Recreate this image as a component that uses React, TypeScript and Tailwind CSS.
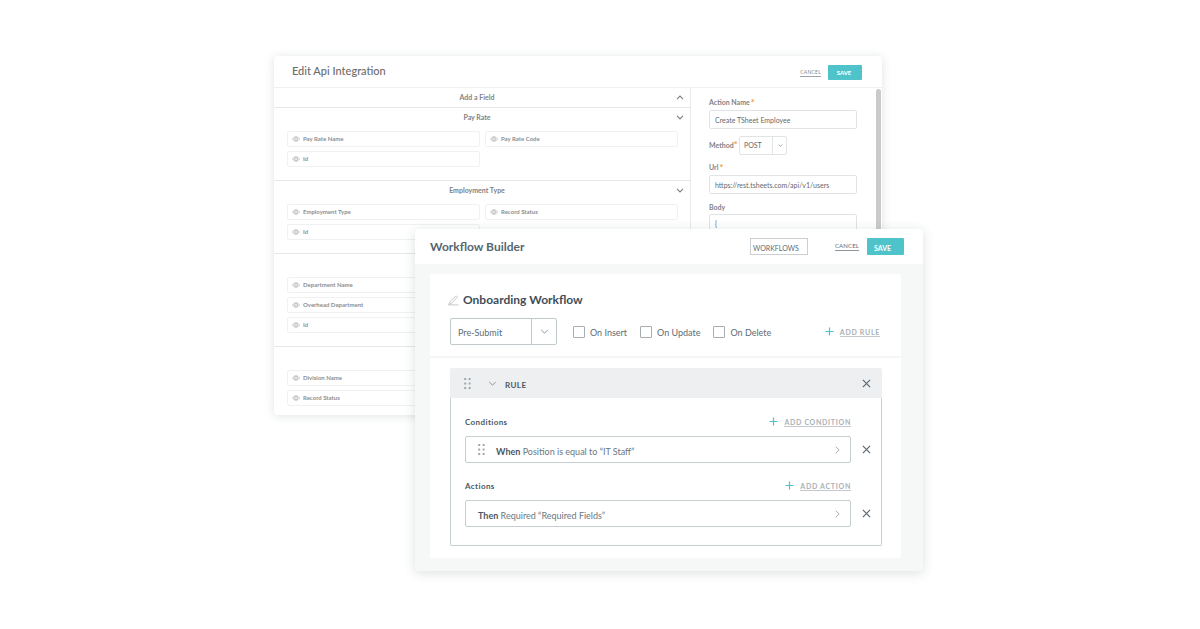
import React from "react";

type IconProps = { className?: string };

const Chevron = ({ className = "" }: IconProps) => (
  <svg viewBox="0 0 10 6" fill="none" stroke="currentColor" strokeWidth="1.2" className={className} aria-hidden="true">
    <path d="M1 1l4 4 4-4" />
  </svg>
);

const BoldChevron = ({ className = "" }: IconProps) => (
  <svg viewBox="0 0 8 5" fill="none" stroke="currentColor" strokeWidth="1.2" className={className} aria-hidden="true">
    <path d="M1 0.900L4 3.900l3-3" />
  </svg>
);

const ChevronRight = ({ className = "" }: IconProps) => (
  <svg viewBox="0 0 5 8" fill="none" stroke="currentColor" className={className} aria-hidden="true">
    <path d="M0.700 0.700L4.200 4L0.700 7.300" />
  </svg>
);

const Eye = ({ className = "" }: IconProps) => (
  <svg viewBox="0 0 16 12" fill="none" stroke="currentColor" strokeWidth="1.200" className={className} aria-hidden="true">
    <path d="M1 6c1.800-3 4.200-4.500 7-4.500S13.200 3 15 6c-1.800 3-4.200 4.500-7 4.500S2.800 9 1 6z" />
    <circle cx="8" cy="6" r="3.200" />
    <path d="M8 4.500v3" />
  </svg>
);

const Cross = ({ className = "" }: IconProps) => (
  <svg viewBox="0 0 9 9" fill="none" stroke="currentColor" strokeWidth="1.200" className={className} aria-hidden="true">
    <path d="M0.900 0.900l7.200 7.200M8.100 0.900L0.900 8.100" />
  </svg>
);

const Plus = ({ className = "" }: IconProps) => (
  <svg viewBox="0 0 9 9" fill="none" stroke="currentColor" strokeWidth="1.200" className={className} aria-hidden="true">
    <path d="M4.500 0.500v8M0.500 4.500h8" />
  </svg>
);

const Grip = ({ className = "" }: IconProps) => (
  <svg viewBox="0 0 7 11" fill="currentColor" className={className} aria-hidden="true">
    {[0, 4.5, 9].map((y) => (
      <React.Fragment key={y}>
        <rect x="0.200" y={y} width="2" height="2" rx="0.500" />
        <rect x="4.600" y={y} width="2" height="2" rx="0.500" />
      </React.Fragment>
    ))}
  </svg>
);

const Pencil = ({ className = "" }: IconProps) => (
  <svg viewBox="0 0 11 11" fill="none" stroke="currentColor" strokeWidth="0.800" className={className} aria-hidden="true">
    <path d="M0.800 9.600l1.400-3L7.600 1.100a0.700 0.700 0 0 1 1 0l0.500 0.500a0.700 0.700 0 0 1 0 1L3.700 8.200L0.800 9.600zM0.500 9.900h10" />
  </svg>
);

type Section = { title: string; fields: string[] };

const sections: Section[] = [
  { title: "Pay Rate", fields: ["Pay Rate Name", "Pay Rate Code", "Id"] },
  { title: "Employment Type", fields: ["Employment Type", "Record Status", "Id"] },
];

const stackedSections: string[][] = [
  ["Department Name", "Overhead Department", "Id"],
  ["Division Name", "Record Status"],
];

function Field({ name }: { name: string }) {
  return (
    <li className="flex h-4 items-center gap-[3px] rounded-xs border border-[#f0f1f2] pl-1 text-[#8b8f92]">
      <Eye className="h-[6px] w-2 text-[#a4a8ab]" />
      <span className="text-[6px] leading-none font-bold">{name}</span>
    </li>
  );
}

function Required() {
  return <span className="text-[9px] leading-[6px] text-[#f39a35]">*</span>;
}

function IntegrationWindow() {
  return (
    <section className="mr-[44px] overflow-hidden rounded-sm bg-white text-[#7f8386] shadow-[0_1px_10px_rgba(40,60,70,0.15)]">
      <header className="flex h-8 items-center border-b border-[#eeefef] pr-5 pl-[18px]">
        <h1 className="flex-1 text-[11px] font-medium text-[#6c6c6c]">Edit Api Integration</h1>
        <button className="mt-0.5 mr-[7px] border-b border-[#9ca4a9] text-[5px] leading-[7px] tracking-wider text-[#7d868c]">CANCEL</button>
        <button className="mt-0.5 h-[15px] w-[34px] rounded-[1px] bg-[#4fc3ca] pt-px pr-0.5 text-[6px] leading-none font-bold text-white">SAVE</button>
      </header>
      <div className="flex h-[327px]">
        <div className="min-w-0 flex-1 border-r border-[#e9ebec]">
          <div className="flex h-5 items-center border-b border-[#e5e8e9] pr-[6px] pl-1">
            <h2 className="flex-1 text-center text-[7px] leading-none font-bold">Add a Field</h2>
            <button aria-label="Collapse fields"><BoldChevron className="h-[5px] w-2 rotate-180" /></button>
          </div>
          {sections.map((s) => (
            <div key={s.title} className="border-b border-[#e5e8e9] pb-[13px]">
              <div className="flex h-[23px] items-center pr-[6px] pb-1 pl-1">
                <h2 className="flex-1 text-center text-[7px] leading-none font-bold">{s.title}</h2>
                <button aria-label={`Toggle ${s.title}`}><BoldChevron className="h-[5px] w-2" /></button>
              </div>
              <ul className="grid grid-cols-2 gap-x-[5px] gap-y-1 pr-3 pl-[13px]">
                {s.fields.map((f) => <Field key={f} name={f} />)}
              </ul>
            </div>
          ))}
          {stackedSections.map((fields) => (
            <div key={fields[0]} className="border-b border-[#e5e8e9] pt-[23px] pb-[13px] last:border-b-0">
              <ul className="grid w-1/2 gap-y-1 pl-[13px]">
                {fields.map((f) => <Field key={f} name={f} />)}
              </ul>
            </div>
          ))}
        </div>
        <form className="flex w-[191px] pt-px pr-px pl-[18px] text-[7px] leading-none">
          <div className="mr-[19px] flex-1">
            <label htmlFor="action" className="flex h-[21px] items-center gap-px pt-2 pb-0.5 font-bold">Action Name <Required /></label>
            <input id="action" defaultValue="Create TSheet Employee" className="block h-[19px] w-full rounded-xs border border-[#e1e4e5] px-[5px] text-[#66696c]" />
            <div className="flex h-[33px] items-center pb-px">
              <label htmlFor="method" className="flex w-[30px] font-bold">Method <Required /></label>
              <span className="relative flex h-[19px] w-12 items-center">
                <select id="method" className="h-full w-full appearance-none rounded-xs border border-[#e1e4e5] px-1 text-[#66696c]"><option>POST</option></select>
                <span className="pointer-events-none absolute inset-y-0 right-0 flex w-[15px] items-center justify-center border-l border-[#e1e4e5]"><BoldChevron className="h-[3px] w-[5px]" /></span>
              </span>
            </div>
            <label htmlFor="url" className="flex h-[13px] items-center gap-px pb-0.5 font-bold">Url <Required /></label>
            <input id="url" defaultValue="https://rest.tsheets.com/api/v1/users" className="block h-[19px] w-full rounded-xs border border-[#e1e4e5] px-[5px] text-[#66696c]" />
            <label htmlFor="body" className="flex h-5 items-center pt-[7px] font-bold">Body</label>
            <textarea id="body" defaultValue="{" className="block h-40 w-full resize-none overflow-hidden rounded-xs border border-[#e1e4e5] px-[5px] py-1.5 text-[#66696c]" />
          </div>
          <div className="w-[5px] rounded-t-full bg-[#c9cacb]" />
        </form>
      </div>
    </section>
  );
}

function AddLink({ children }: { children: string }) {
  return (
    <a href="#" className="flex items-center gap-[6px] text-[7px] leading-none font-bold tracking-widest text-[#a9b1b6]">
      <Plus className="h-[9px] w-[9px] text-[#4fc3ca]" />
      <span className="border-b border-[#c2c8cb] pt-[3px]">{children}</span>
    </a>
  );
}

function Entry({ lead, text, draggable = false }: { lead: string; text: string; draggable?: boolean }) {
  return (
    <div className="flex items-center">
      <button className="flex h-[27px] flex-1 items-center rounded-xs border border-[#c6ced2] pr-[10px] pl-3 text-left text-[9px] leading-none text-[#6a7880]">
        {draggable && <Grip className="mr-[11px] h-[11px] w-[7px] text-[#9ba6ab]" />}
        <span className="flex-1 pt-[3px]"><strong className="text-[#4a5963]">{lead}</strong> {text}</span>
        <ChevronRight className="h-2 w-[5px] text-[#a9b1b6]" />
      </button>
      <button aria-label={`Remove ${lead}`} className="ml-[11px]"><Cross className="h-[9px] w-[9px] text-[#5b6972]" /></button>
    </div>
  );
}

function WorkflowWindow() {
  return (
    <section className="absolute top-[173px] right-[3px] left-[141px] rounded-sm bg-[#f6f8f8] pb-[13px] text-[#5d6c75] shadow-[0_2px_12px_rgba(40,60,70,0.16)]">
      <header className="flex h-[35px] items-center rounded-t-sm bg-white pr-[19px] pl-[15px]">
        <h1 className="flex-1 pt-px text-[12px] font-bold text-[#566670]">Workflow Builder</h1>
        <button className="h-[17px] w-[58px] border border-[#c9cfd3] pt-[3px] pr-1.5 text-[7px] leading-none">WORKFLOWS</button>
        <button className="mr-2 ml-[27px] border-b border-[#8b969c] text-[6px] leading-[8px] tracking-wide">CANCEL</button>
        <button className="h-[17px] w-[37px] rounded-[1px] bg-[#4fc3ca] pt-[3px] pr-1.5 text-[7px] leading-none font-bold text-white">SAVE</button>
      </header>
      <div className="mt-[10px] mr-[22px] ml-[15px] rounded-xs bg-white">
        <div className="border-b-2 border-[#f3f5f6] pt-4 pr-[21px] pb-[11px] pl-5">
          <div className="flex h-5 items-center gap-1">
            <button aria-label="Rename workflow" className="-ml-0.5"><Pencil className="h-[11px] w-[11px] text-[#b2babf]" /></button>
            <h2 className="text-[12px] font-bold text-[#3f4e58]">Onboarding Workflow</h2>
          </div>
          <div className="mt-2 flex items-center text-[9px] leading-none">
            <span className="relative h-[27px] w-[107px]">
              <select aria-label="Trigger" className="h-full w-full appearance-none rounded-xs border border-[#c2c9cd] px-[7px] pt-px"><option>Pre-Submit</option></select>
              <span className="pointer-events-none absolute inset-y-0 right-0 flex w-[26px] items-center justify-center border-l border-[#c2c9cd]"><Chevron className="h-[5px] w-[9px] text-[#8c979d]" /></span>
            </span>
            <div className="ml-4 flex flex-1 gap-[13px]">
              {["On Insert", "On Update", "On Delete"].map((label) => (
                <label key={label} className="flex items-center gap-[5px]">
                  <input type="checkbox" className="h-3 w-3 appearance-none rounded-[1px] border border-[#a7aeb2] checked:bg-[#4fc3ca]" />
                  <span className="pt-px">{label}</span>
                </label>
              ))}
            </div>
            <AddLink>ADD RULE</AddLink>
          </div>
        </div>
        <div className="pt-[10px] pr-[19px] pb-3 pl-5">
          <div className="flex h-[30px] items-center rounded-t-xs bg-[#edeff1] pr-[11px] pl-[14px]">
            <Grip className="h-[11px] w-[7px] text-[#9ba6ab]" />
            <button aria-label="Collapse rule" className="ml-[17px]"><Chevron className="h-[5px] w-[9px] text-[#8c979d]" /></button>
            <h3 className="ml-2 flex-1 pt-[3px] text-[8px] leading-none font-bold tracking-wider text-[#4a5963]">RULE</h3>
            <button aria-label="Remove rule"><Cross className="h-[9px] w-[9px] text-[#5b6972]" /></button>
          </div>
          <div className="rounded-b-xs border border-t-0 border-[#c6ced2] pt-[17px] pr-[10px] pb-[18px] pl-[14px]">
            <div className="mb-2 flex h-[13px] items-center justify-between pr-5">
              <h4 className="text-[8px] leading-none font-bold tracking-wider text-[#4a5963]">Conditions</h4>
              <AddLink>ADD CONDITION</AddLink>
            </div>
            <Entry lead="When" text="Position is equal to “IT Staff”" draggable />
            <div className="mt-4 mb-2 flex h-[13px] items-center justify-between pr-5">
              <h4 className="text-[8px] leading-none font-bold tracking-wider text-[#4a5963]">Actions</h4>
              <AddLink>ADD ACTION</AddLink>
            </div>
            <Entry lead="Then" text="Required “Required Fields”" />
          </div>
        </div>
      </div>
    </section>
  );
}

export default function App() {
  return (
    <main className="min-h-screen bg-white pt-14 font-['Lato',sans-serif]">
      <div className="relative mx-auto w-full max-w-[652px] pb-[180px]">
        <IntegrationWindow />
        <WorkflowWindow />
      </div>
    </main>
  );
}
